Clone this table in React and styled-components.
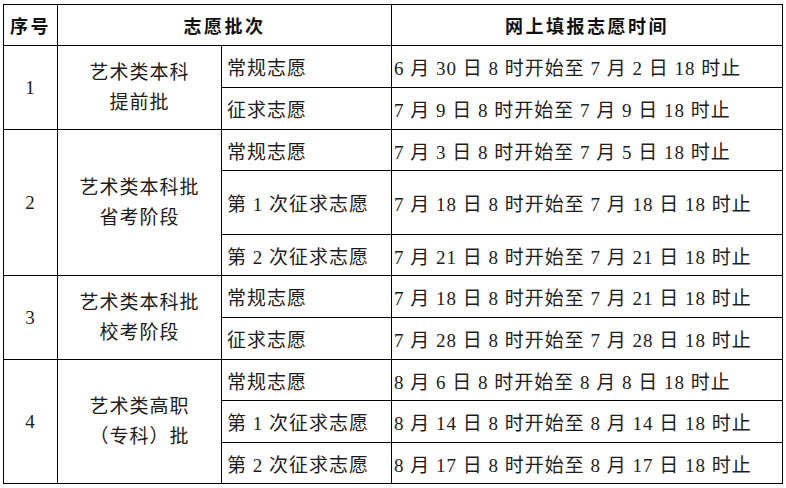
import React from 'react';
import styled, { createGlobalStyle } from 'styled-components';

const GlobalStyle = createGlobalStyle`
  body {
    margin: 0;
    background: #fff;
  }
`;

const Page = styled.div`
  padding: 4px 0 0 3px;
  font-family: 'Liberation Serif', 'Noto Sans CJK SC', serif;
  color: #1c1c1c;
`;

const Table = styled.table`
  border-collapse: collapse;
  table-layout: fixed;
  width: 779px;
`;

const Col = styled.col`
  width: ${({ $w }) => $w}px;
`;

const Row = styled.tr`
  height: ${({ $h }) => $h}px;
`;

const HeadCell = styled.th`
  border: 1px solid #000;
  padding: 0;
  font-family: 'Noto Sans CJK SC', sans-serif;
  font-size: 18px;
  font-weight: 700;
  letter-spacing: 2.5px;
  text-align: center;
  vertical-align: middle;
  color: #111;
`;

const Cell = styled.td`
  border: 1px solid #000;
  padding: ${({ $pad }) => ($pad ? `0 0 0 ${$pad}px` : '0')};
  font-size: 19px;
  letter-spacing: 1px;
  line-height: ${({ $lh }) => ($lh ? `${$lh}px` : 'normal')};
  text-align: ${({ $align }) => $align || 'left'};
  vertical-align: middle;
  white-space: nowrap;
`;

const groups = [
  {
    no: '1',
    name: ['艺术类本科', '提前批'],
    rows: [
      { kind: '常规志愿', time: '6 月 30 日 8 时开始至 7 月 2 日 18 时止', h: 42 },
      { kind: '征求志愿', time: '7 月 9 日 8 时开始至 7 月 9 日 18 时止', h: 42 },
    ],
  },
  {
    no: '2',
    name: ['艺术类本科批', '省考阶段'],
    rows: [
      { kind: '常规志愿', time: '7 月 3 日 8 时开始至 7 月 5 日 18 时止', h: 41 },
      { kind: '第 1 次征求志愿', time: '7 月 18 日 8 时开始至 7 月 18 日 18 时止', h: 64 },
      { kind: '第 2 次征求志愿', time: '7 月 21 日 8 时开始至 7 月 21 日 18 时止', h: 41 },
    ],
  },
  {
    no: '3',
    name: ['艺术类本科批', '校考阶段'],
    rows: [
      { kind: '常规志愿', time: '7 月 18 日 8 时开始至 7 月 21 日 18 时止', h: 42 },
      { kind: '征求志愿', time: '7 月 28 日 8 时开始至 7 月 28 日 18 时止', h: 42 },
    ],
  },
  {
    no: '4',
    name: ['艺术类高职', '（专科）批'],
    rows: [
      { kind: '常规志愿', time: '8 月 6 日 8 时开始至 8 月 8 日 18 时止', h: 41 },
      { kind: '第 1 次征求志愿', time: '8 月 14 日 8 时开始至 8 月 14 日 18 时止', h: 42 },
      { kind: '第 2 次征求志愿', time: '8 月 17 日 8 时开始至 8 月 17 日 18 时止', h: 41 },
    ],
  },
];

const App = () => (
  <Page>
    <GlobalStyle />
    <Table>
      <colgroup>
        <Col $w={54} />
        <Col $w={164} />
        <Col $w={170} />
        <Col $w={391} />
      </colgroup>
      <thead>
        <Row $h={41}>
          <HeadCell>序号</HeadCell>
          <HeadCell colSpan={2}>志愿批次</HeadCell>
          <HeadCell>网上填报志愿时间</HeadCell>
        </Row>
      </thead>
      <tbody>
        {groups.map((g) =>
          g.rows.map((r, i) => (
            <Row key={g.no + r.kind} $h={r.h}>
              {i === 0 && (
                <>
                  <Cell rowSpan={g.rows.length} $align="center">
                    {g.no}
                  </Cell>
                  <Cell rowSpan={g.rows.length} $align="center" $lh={30}>
                    {g.name[0]}
                    <br />
                    {g.name[1]}
                  </Cell>
                </>
              )}
              <Cell $pad={5}>{r.kind}</Cell>
              <Cell $pad={2}>{r.time}</Cell>
            </Row>
          ))
        )}
      </tbody>
    </Table>
  </Page>
);

export default App;
